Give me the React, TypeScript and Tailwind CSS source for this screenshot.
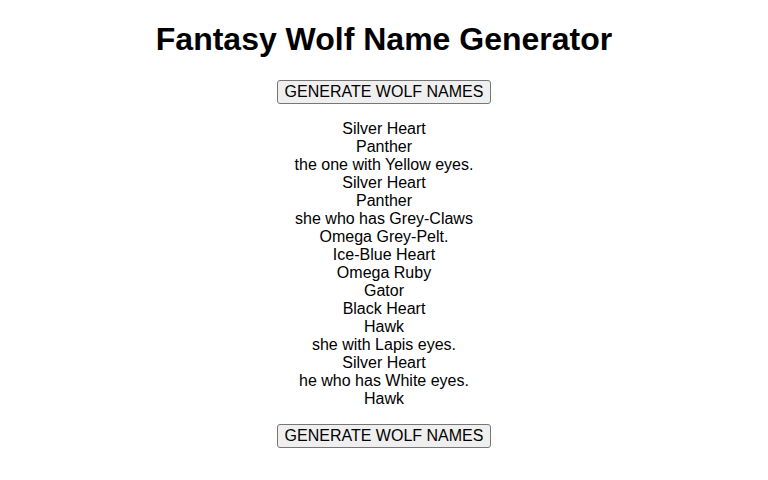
import React from 'react';

const names: string[] = [
  'Silver Heart',
  'Panther',
  'the one with Yellow eyes.',
  'Silver Heart',
  'Panther',
  'she who has Grey-Claws',
  'Omega Grey-Pelt.',
  'Ice-Blue Heart',
  'Omega Ruby',
  'Gator',
  'Black Heart',
  'Hawk',
  'she with Lapis eyes.',
  'Silver Heart',
  'he who has White eyes.',
  'Hawk',
];

const GenerateButton: React.FC = () => (
  <button className="border border-[#767676] bg-[#efefef] rounded-[3px] px-[7px] py-[1px] text-[16px] leading-[20px] text-black">
    GENERATE WOLF NAMES
  </button>
);

const App: React.FC = () => {
  return (
    <div className="min-h-[480px] bg-white text-black text-center font-['Liberation_Sans',Arial,sans-serif]">
      <h1 className="pt-[21px] mb-[22px] text-[32px] leading-[37px] font-bold">
        Fantasy Wolf Name Generator
      </h1>
      <GenerateButton />
      <div className="mt-[16px] mb-[16px] text-[16px] leading-[18px]">
        {names.map((name, i) => (
          <div key={i}>{name}</div>
        ))}
      </div>
      <GenerateButton />
    </div>
  );
};

export default App;
